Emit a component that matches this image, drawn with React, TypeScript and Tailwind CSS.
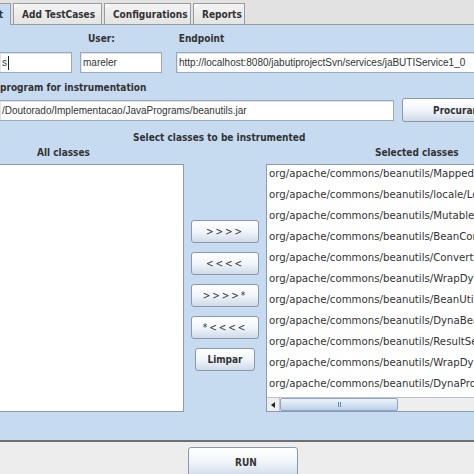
import React from "react";

const selected = [
  "org/apache/commons/beanutils/MappedPropertyDescriptor",
  "org/apache/commons/beanutils/locale/LocaleBeanUtils",
  "org/apache/commons/beanutils/MutableDynaClass",
  "org/apache/commons/beanutils/BeanComparator",
  "org/apache/commons/beanutils/ConvertUtils",
  "org/apache/commons/beanutils/WrapDynaClass",
  "org/apache/commons/beanutils/BeanUtilsBean",
  "org/apache/commons/beanutils/DynaBean",
  "org/apache/commons/beanutils/ResultSetDynaClass",
  "org/apache/commons/beanutils/WrapDynaBean",
  "org/apache/commons/beanutils/DynaProperty",
  "org/apache/commons/beanutils/PropertyUtils",
];

const label = "font-['DejaVu_Sans_Condensed','DejaVu_Sans',sans-serif] font-bold text-[10px] text-[#333]";
const field =
  "h-[21px] shrink-0 border border-[#9aa8ba] bg-white font-['Liberation_Sans',sans-serif] text-[10px] text-[#333] flex items-center pl-[2px] whitespace-nowrap overflow-hidden shadow-[inset_1px_1px_0_#dde3ea]";
const btn =
  "flex items-center justify-center rounded-[3px] border border-[#8a98ad] bg-gradient-to-b from-white via-[#f1f5fa] to-[#cfdbe9] text-[#333] " +
  label;

function Tab({ text, w }: { text: string; w: string }) {
  return (
    <div className={`relative h-[21px] ${w} border border-b-0 border-[#9c9c9c] bg-gradient-to-b from-[#f4f4f4] to-[#e4e4e4] flex items-center pl-[8px] ${label}`}>
      <div className="absolute left-0 top-0 h-0 w-0 border-t-[5px] border-r-[5px] border-t-white border-r-transparent" />
      {text}
    </div>
  );
}

export default function App() {
  return (
    <div className="w-[474px] h-[474px] overflow-hidden bg-[#ededed] flex flex-col">
      {/* tabs */}
      <div className="h-[25px] shrink-0 flex items-end gap-[2px] bg-[#e2e2e2] border-b border-[#9c9c9c]">
        <div className={`h-[22px] w-[11px] -mb-px bg-[#c6daf0] border-r border-t border-[#9c9c9c] overflow-hidden flex justify-end items-center ${label}`}>
          <span className="pr-[7px]">t</span>
        </div>
        <Tab text="Add TestCases" w="w-[89px]" />
        <Tab text="Configurations" w="w-[87px]" />
        <Tab text="Reports" w="w-[52px]" />
      </div>

      {/* main panel */}
      <div className="h-[415px] shrink-0 bg-[#c6daf0] flex flex-col">
        <div className={`mt-[6px] h-[14px] flex items-center ${label}`}>
          <span className="ml-[88px]">User:</span>
          <span className="ml-[64px]">Endpoint</span>
        </div>
        <div className="mt-[7px] flex">
          <div className={`${field} w-[73px] -ml-px`}>
            s<span className="ml-[1px] h-[14px] w-px bg-[#222]" />
          </div>
          <div className={`${field} w-[82px] ml-[8px]`}>mareler</div>
          <div className={`${field} w-[310px] ml-[14px]`}>http://localhost:8080/jabutiprojectSvn/services/jaBUTIService1_0</div>
        </div>
        <div className={`mt-[7px] h-[14px] flex items-center ${label}`}>program for instrumentation</div>
        <div className="mt-[4px] h-[24px] flex items-center">
          <div className={`${field} w-[395px] -ml-px`}>/Doutorado/Implementacao/JavaPrograms/beanutils.jar</div>
          <div className={`${btn} ml-[8px] h-[24px] w-[106px] shrink-0`}>Procurar</div>
        </div>
        <div className={`mt-[8px] h-[14px] flex items-center ${label}`}>
          <span className="ml-[133px]">Select classes to be instrumented</span>
        </div>
        <div className={`mt-[1px] h-[14px] flex items-center ${label}`}>
          <span className="ml-[37px]">All classes</span>
          <span className="ml-[285px]">Selected classes</span>
        </div>
        <div className="mt-[5px] h-[248px] flex">
          <div className="w-[185px] -ml-px bg-white border border-[#8c9bb0] shrink-0" />
          <div className="w-[82px] shrink-0 flex flex-col items-center pt-[56px] gap-[9px]">
            <div className={`${btn} w-[68px] h-[23px] tracking-[2px] font-normal`}>&gt;&gt;&gt;&gt;</div>
            <div className={`${btn} w-[68px] h-[23px] tracking-[2px] font-normal`}>&lt;&lt;&lt;&lt;</div>
            <div className={`${btn} w-[68px] h-[23px] tracking-[2px] font-normal`}>&gt;&gt;&gt;&gt;*</div>
            <div className={`${btn} w-[68px] h-[23px] tracking-[2px] font-normal`}>*&lt;&lt;&lt;&lt;</div>
            <div className={`${btn} w-[60px] h-[23px]`}>Limpar</div>
          </div>
          <div className="w-[260px] shrink-0 bg-white border border-[#8c9bb0] flex flex-col">
            <div className="flex-1 overflow-hidden">
              <div className="-mt-[2px]">
                {selected.map((s, i) => (
                  <div
                    key={i}
                    className="h-[21px] flex items-center pl-[2px] whitespace-nowrap font-['DejaVu_Sans',sans-serif] text-[10.2px] text-[#333]"
                  >
                    {s}
                  </div>
                ))}
              </div>
            </div>
            <div className="h-[14px] shrink-0 flex bg-[#eeeeee] border-t border-[#b8c4d2]">
              <div className="w-[13px] flex items-center justify-center border-r border-[#b8c4d2]">
                <div className="h-0 w-0 border-y-[3px] border-r-[4px] border-y-transparent border-r-[#222]" />
              </div>
              <div className="w-[118px] flex items-center justify-center rounded-[2px] border border-[#8fa5c2] bg-gradient-to-b from-[#eef4fb] to-[#bcd1ea]">
                <div className="h-[5px] w-[3px] border-x border-[#6f87a6]" />
              </div>
            </div>
          </div>
        </div>
      </div>

      {/* bottom bar */}
      <div className="h-[2px] shrink-0 bg-[#6d7074]" />
      <div className="flex-1 flex justify-start">
        <div className={`${btn} ml-[188px] mt-[5px] w-[110px] h-[30px] pl-[6px] shrink-0`}>RUN</div>
      </div>
    </div>
  );
}
